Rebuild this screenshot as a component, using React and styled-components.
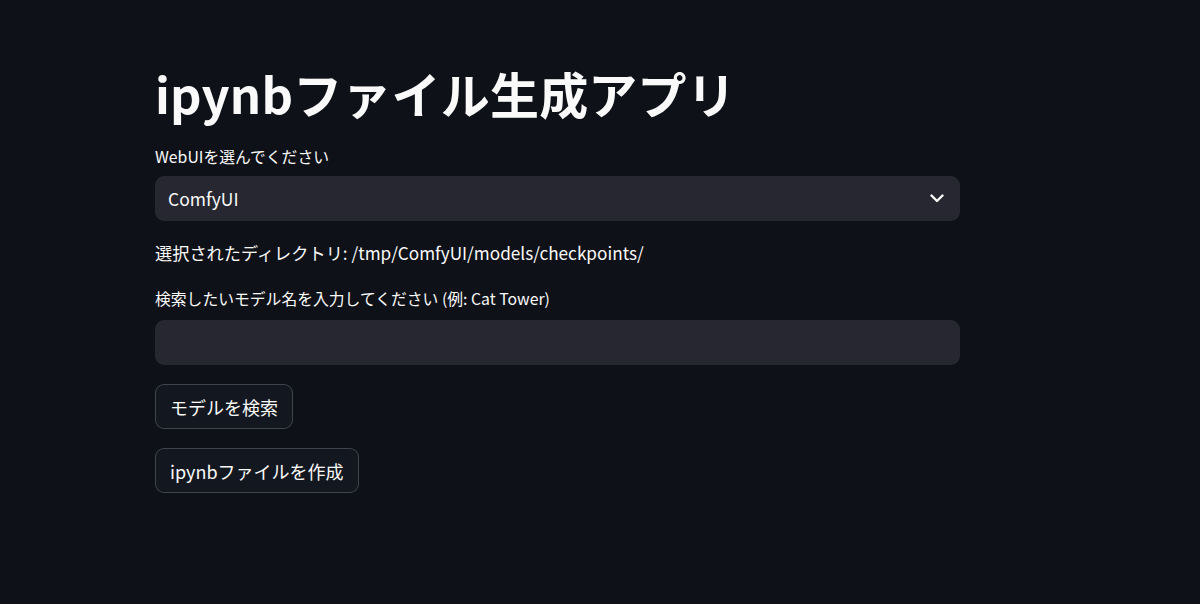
import React from "react";
import styled, { createGlobalStyle } from "styled-components";

const GlobalStyle = createGlobalStyle`
  html, body {
    margin: 0;
    padding: 0;
    background: #0e1117;
  }
  body {
    font-family: "Noto Sans CJK JP", "Noto Sans", sans-serif;
    color: #fafafa;
  }
`;

const Page = styled.div`
  min-height: 604px;
  background: #0e1117;
  padding: 63px 0 0 155px;
  box-sizing: border-box;
`;

const Main = styled.main`
  width: 805px;
  display: flex;
  flex-direction: column;
  gap: 18px;
`;

const Title = styled.h1`
  margin: 0 0 4px;
  font-size: 49px;
  line-height: 60px;
  font-weight: 700;
  color: #fafafa;
  letter-spacing: 0.2px;
`;

const Field = styled.div`
  display: flex;
  flex-direction: column;
  gap: ${(p) => p.$gap || 7}px;
`;

const Label = styled.label`
  font-size: 15.8px;
  line-height: 24px;
  color: #fafafa;
`;

const SelectBox = styled.div`
  height: 45px;
  border-radius: 9px;
  background: #262730;
  display: flex;
  align-items: center;
  justify-content: space-between;
  padding: 0 16px 0 13px;
  box-sizing: border-box;
  font-size: 17.5px;
  color: #fafafa;
  cursor: pointer;
`;

const TextInput = styled.input`
  height: 45px;
  border-radius: 9px;
  background: #262730;
  border: none;
  outline: none;
  padding: 0 13px;
  box-sizing: border-box;
  font-family: inherit;
  font-size: 17.5px;
  color: #fafafa;
`;

const Paragraph = styled.p`
  margin: 0;
  font-size: 17.2px;
  line-height: 28px;
  padding-bottom: 2px;
  color: #fafafa;
`;

const Button = styled.button`
  align-self: flex-start;
  height: 45px;
  margin-top: 1px;
  padding: 0 14px;
  border-radius: 9px;
  border: 1px solid rgba(250, 250, 250, 0.2);
  background: #13171f;
  color: #fafafa;
  font-family: inherit;
  font-size: 18px;
  line-height: 1;
  cursor: pointer;
`;

const Chevron = () => (
  <svg width="14" height="9" viewBox="0 0 14 9" fill="none">
    <path
      d="M1.5 1.5 L7 7 L12.5 1.5"
      stroke="#fafafa"
      strokeWidth="2.4"
      strokeLinecap="round"
      strokeLinejoin="round"
    />
  </svg>
);

export default function App() {
  return (
    <>
      <GlobalStyle />
      <Page>
        <Main>
          <Title>ipynbファイル生成アプリ</Title>
          <Field>
            <Label>WebUIを選んでください</Label>
            <SelectBox>
              <span>ComfyUI</span>
              <Chevron />
            </SelectBox>
          </Field>
          <Paragraph>選択されたディレクトリ: /tmp/ComfyUI/models/checkpoints/</Paragraph>
          <Field $gap={9}>
            <Label>検索したいモデル名を入力してください (例: Cat Tower)</Label>
            <TextInput type="text" />
          </Field>
          <Button>モデルを検索</Button>
          <Button>ipynbファイルを作成</Button>
        </Main>
      </Page>
    </>
  );
}
